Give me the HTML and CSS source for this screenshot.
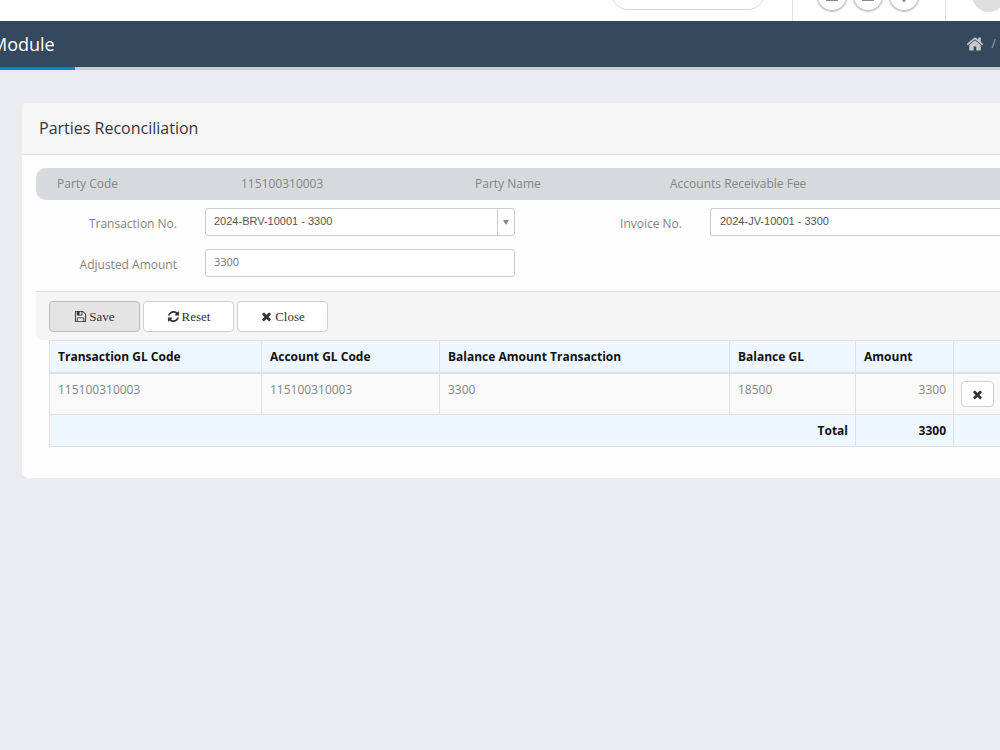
FILE: index.html
```html
<!DOCTYPE html>
<html lang="en">
<head>
<meta charset="utf-8">
<title>Parties Reconciliation</title>
<link rel="stylesheet" href="styles.css">
</head>
<body>
<header class="topbar">
  <input class="search" type="search" aria-label="Search">
  <div class="notices">
    <button class="round" type="button" aria-label="Tasks"><svg viewBox="0 0 12 12"><path d="M0 1h12v10H0z"/></svg></button>
    <button class="round" type="button" aria-label="Messages"><svg viewBox="0 0 12 12"><path d="M0 1h12v10H0z"/></svg></button>
    <button class="round" type="button" aria-label="Alerts"><svg viewBox="0 0 12 12"><path d="M6 0q4 1 4 5l1 4H7.500v1.500a1.500 1.500 0 0 1-3 0V9H1l1-4q0-4 4-5z"/></svg></button>
  </div>
  <div class="account"><span class="avatar"></span></div>
</header>

<div class="pagehead">
  <h2 class="module">Module</h2>
  <nav class="crumbs" aria-label="Breadcrumb">
    <a href="#" aria-label="Home"><svg viewBox="0 0 1792 1792"><path d="M1472 992v480q0 26-19 45t-45 19h-384v-384h-256v384h-384q-26 0-45-19t-19-45v-480q0-1 .5-3t.5-3l575-474 575 474q1 2 1 6zm223-69l-62 74q-8 9-21 11h-3q-13 0-21-7l-692-577-692 577q-12 8-24 7-13-2-21-11l-62-74q-8-10-7-23.500t11-21.500l719-599q32-26 76-26t76 26l244 204v-195q0-14 9-23t23-9h192q14 0 23 9t9 23v408l219 182q10 8 11 21.500t-7 23.500z"/></svg></a>
    <span>/</span>
  </nav>
</div>
<div class="track"><div class="track-active"></div></div>

<main class="card">
  <h1 class="card-title">Parties Reconciliation</h1>
  <form class="card-body">
    <div class="party">
      <span>Party Code</span><span>115100310003</span><span>Party Name</span><span>Accounts Receivable Fee</span>
    </div>
    <div class="fields">
      <label for="trans">Transaction No.</label>
      <div class="picker">
        <select id="trans" class="control"><option>2024-BRV-10001 - 3300</option></select>
        <span class="arrow"></span>
      </div>
      <label for="invoice">Invoice No.</label>
      <select id="invoice" class="control open-end"><option>2024-JV-10001 - 3300</option></select>
      <label for="adjusted">Adjusted Amount</label>
      <input id="adjusted" class="control amount" type="text" value="3300">
    </div>
    <div class="actions">
      <button class="btn btn-active" type="button"><svg viewBox="0 0 1792 1792"><path d="M512 1536h768v-384h-768v384zm896 0h128v-896q0-14-10-38.500t-20-34.500l-281-281q-10-10-34-20t-39-10v416q0 40-28 68t-68 28h-576q-40 0-68-28t-28-68v-416h-128v1280h128v-416q0-40 28-68t68-28h832q40 0 68 28t28 68v416zm-384-928v-320q0-13-9.500-22.500t-22.500-9.500h-192q-13 0-22.500 9.500t-9.500 22.500v320q0 13 9.500 22.500t22.500 9.500h192q13 0 22.500-9.500t9.500-22.500zm640 32v928q0 40-28 68t-68 28h-1344q-40 0-68-28t-28-68v-1344q0-40 28-68t68-28h928q40 0 88 20t76 48l280 280q28 28 48 76t20 88z"/></svg>Save</button>
      <button class="btn" type="reset"><svg viewBox="0 0 1792 1792"><path d="M1639 1056q0 5-1 7-64 268-268 434.500t-478 166.500q-146 0-282.500-55t-243.500-157l-129 129q-19 19-45 19t-45-19-19-45v-448q0-26 19-45t45-19h448q26 0 45 19t19 45-19 45l-137 137q71 66 161 102t187 36q134 0 250-65t186-179q11-17 53-117 8-23 30-23h192q13 0 22.500 9.500t9.500 22.500zm25-800v448q0 26-19 45t-45 19h-448q-26 0-45-19t-19-45 19-45l138-138q-148-137-349-137-134 0-250 65t-186 179q-11 17-53 117-8 23-30 23h-199q-13 0-22.500-9.500t-9.500-22.500v-7q65-268 270-434.500t480-166.500q146 0 284 55.500t245 156.500l130-129q19-19 45-19t45 19 19 45z"/></svg>Reset</button>
      <button class="btn" type="button"><svg viewBox="0 0 1792 1792"><path d="M1490 1322q0 40-28 68l-136 136q-28 28-68 28t-68-28l-294-294-294 294q-28 28-68 28t-68-28l-136-136q-28-28-28-68t28-68l294-294-294-294q-28-28-28-68t28-68l136-136q28-28 68-28t68 28l294 294 294-294q28-28 68-28t68 28l136 136q28 28 28 68t-28 68l-294 294 294 294q28 28 28 68z"/></svg>Close</button>
    </div>
    <table class="ledger">
      <colgroup><col class="c-trans"><col class="c-account"><col><col class="c-balance"><col class="c-amount"><col class="c-remove"></colgroup>
      <thead>
        <tr><th>Transaction GL Code</th><th>Account GL Code</th><th>Balance Amount Transaction</th><th>Balance GL</th><th>Amount</th><th></th></tr>
      </thead>
      <tbody>
        <tr><td>115100310003</td><td>115100310003</td><td>3300</td><td>18500</td><td class="num">3300</td>
          <td><button class="btn remove" type="button" aria-label="Remove"><svg viewBox="0 0 1792 1792"><path d="M1490 1322q0 40-28 68l-136 136q-28 28-68 28t-68-28l-294-294-294 294q-28 28-68 28t-68-28l-136-136q-28-28-28-68t28-68l294-294-294-294q-28-28-28-68t28-68l136-136q28-28 68-28t68 28l294 294 294-294q28-28 68-28t68 28l136 136q28 28 28 68t-28 68l-294 294 294 294q28 28 28 68z"/></svg></button></td></tr>
      </tbody>
      <tfoot>
        <tr><th class="num" colspan="4">Total</th><th class="num">3300</th><th></th></tr>
      </tfoot>
    </table>
  </form>
</main>
</body>
</html>
```

FILE: styles.css
```css
* { box-sizing: border-box; }
body {
  margin: 0;
  background: #ebecf0;
  color: #858585;
  font: 12px/18px "Open Sans", sans-serif;
  overflow-x: hidden;
}
svg { display: block; fill: currentColor; }

.topbar {
  display: flex;
  justify-content: flex-end;
  align-items: flex-end;
  height: 21px;
  overflow: hidden;
  background: #fff;
}
.search {
  width: 154px;
  height: 34px;
  margin: 0 27px 11px 0;
  padding: 0 16px;
  border: 1px solid #d8d8d8;
  border-radius: 17px;
  background: #fff;
  flex: none;
}
.notices {
  display: flex;
  align-items: flex-end;
  gap: 8px;
  width: 153px;
  height: 40px;
  padding: 0 0 11px 25px;
  border-left: 1px solid #e4e4e4;
}
.round {
  display: grid;
  place-items: center;
  width: 28px;
  height: 28px;
  padding: 0;
  border: 0;
  border-radius: 50%;
  background: #fff;
  color: #8a8a8a;
  box-shadow: 0 1px 2px 1px rgba(0, 0, 0, .25);
}
.round svg { width: 12px; height: 12px; }
.account {
  display: flex;
  align-items: flex-end;
  width: 55px;
  height: 40px;
  padding: 0 0 9px 26px;
  border-left: 1px solid #e4e4e4;
}
.avatar {
  flex: none;
  width: 34px;
  height: 34px;
  border-radius: 50%;
  background: #dedede;
}

.pagehead {
  display: flex;
  align-items: center;
  justify-content: space-between;
  height: 46px;
  background: #34495e;
}
.module {
  margin: 0 0 0 -9px;
  color: #fff;
  font-size: 18px;
  font-weight: 400;
  line-height: 46px;
}
.crumbs {
  display: flex;
  align-items: center;
  gap: 8px;
  padding-right: 4px;
  color: #9aa4ae;
}
.crumbs a { color: #c8c8c8; }
.crumbs svg { width: 18px; height: 18px; }
.track { height: 3px; background: #ccc; }
.track-active { width: 75px; height: 3px; background: #0088cc; }

.card {
  margin: 33px 0 0 22px;
  border-radius: 5px 0 0 5px;
  background: #fdfdfd;
  box-shadow: 0 1px 1px rgba(0, 0, 0, .06);
  overflow: hidden;
}
.card-title {
  margin: 0;
  padding: 15px 17px 16px;
  border-bottom: 1px solid #e0e0e0;
  background: #f6f6f6;
  color: #33353f;
  font-size: 16px;
  font-weight: 400;
  line-height: 20px;
}
.card-body { padding: 13px 0 31px 14px; }
.party {
  display: grid;
  grid-template-columns: 184fr 234fr 195fr 330fr;
  padding: 7px 0 7px 21px;
  border-radius: 10px 0 0 10px;
  background: #d6dadd;
}
.fields {
  display: grid;
  grid-template-columns: 141px minmax(0, 310fr) 139px minmax(0, 290fr);
  gap: 13px 28px;
  padding: 8px 0 14px;
  border-bottom: 1px solid #dfdfdf;
}
.fields label { padding-top: 7px; text-align: right; }
.control {
  width: 100%;
  height: 28px;
  margin: 0;
  padding: 0 8px 2px;
  border: 1px solid #ccc;
  border-radius: 3px;
  background: #fff;
  color: #555;
  font: 11px/16px "Liberation Sans", sans-serif;
  appearance: none;
}
.amount { padding-bottom: 4px; color: #777; font-family: "Open Sans", sans-serif; }
.open-end { padding-left: 9px; border-right: 0; border-radius: 3px 0 0 3px; }
.picker { position: relative; }
.arrow {
  position: absolute;
  top: 1px;
  right: 1px;
  display: grid;
  place-items: center;
  width: 17px;
  height: 26px;
  border-left: 1px solid #ccc;
  pointer-events: none;
}
.arrow::before {
  content: "";
  border: 3px solid transparent;
  border-top: 5px solid #888;
  border-bottom: 0;
}

.actions {
  display: flex;
  gap: 3px;
  padding: 9px 13px 8px;
  border-radius: 0 0 0 5px;
  background: #f5f5f5;
}
.btn {
  display: flex;
  align-items: center;
  justify-content: center;
  gap: 2px;
  width: 91px;
  height: 31px;
  padding: 0;
  border: 1px solid #d0d0d0;
  border-radius: 4px;
  background: #fff;
  color: #333;
  font: 13px/18px "Liberation Serif", serif;
}
.btn svg { width: 13px; height: 13px; }
.btn-active { border-color: #bbb; background: #e4e4e4; }

.ledger {
  width: calc(100% - 13px);
  margin-left: 13px;
  table-layout: fixed;
  border-collapse: separate;
  border-spacing: 0;
  border-top: 1px solid #e0e0e0;
}
.c-trans { width: 213px; }
.c-account { width: 178px; }
.c-balance { width: 126px; }
.c-amount { width: 98px; }
.c-remove { width: 46px; }
.ledger th, .ledger td {
  padding: 7px 7px 7px 8px;
  border-right: 1px solid #e0e0e0;
  border-bottom: 1px solid #e0e0e0;
  text-align: left;
  vertical-align: top;
}
.ledger tr > :first-child { border-left: 1px solid #e0e0e0; }
.ledger tr > :last-child { padding-left: 7px; border-right: 0; }
.ledger th { background: #eef7ff; color: #111; font-weight: 700; }
.ledger thead th { padding-bottom: 6px; border-bottom-width: 2px; }
.ledger tfoot th { padding-bottom: 6px; }
.ledger td { background: #f9f9f9; }
.ledger .num { text-align: right; }
.remove { width: 33px; height: 26px; }
```
